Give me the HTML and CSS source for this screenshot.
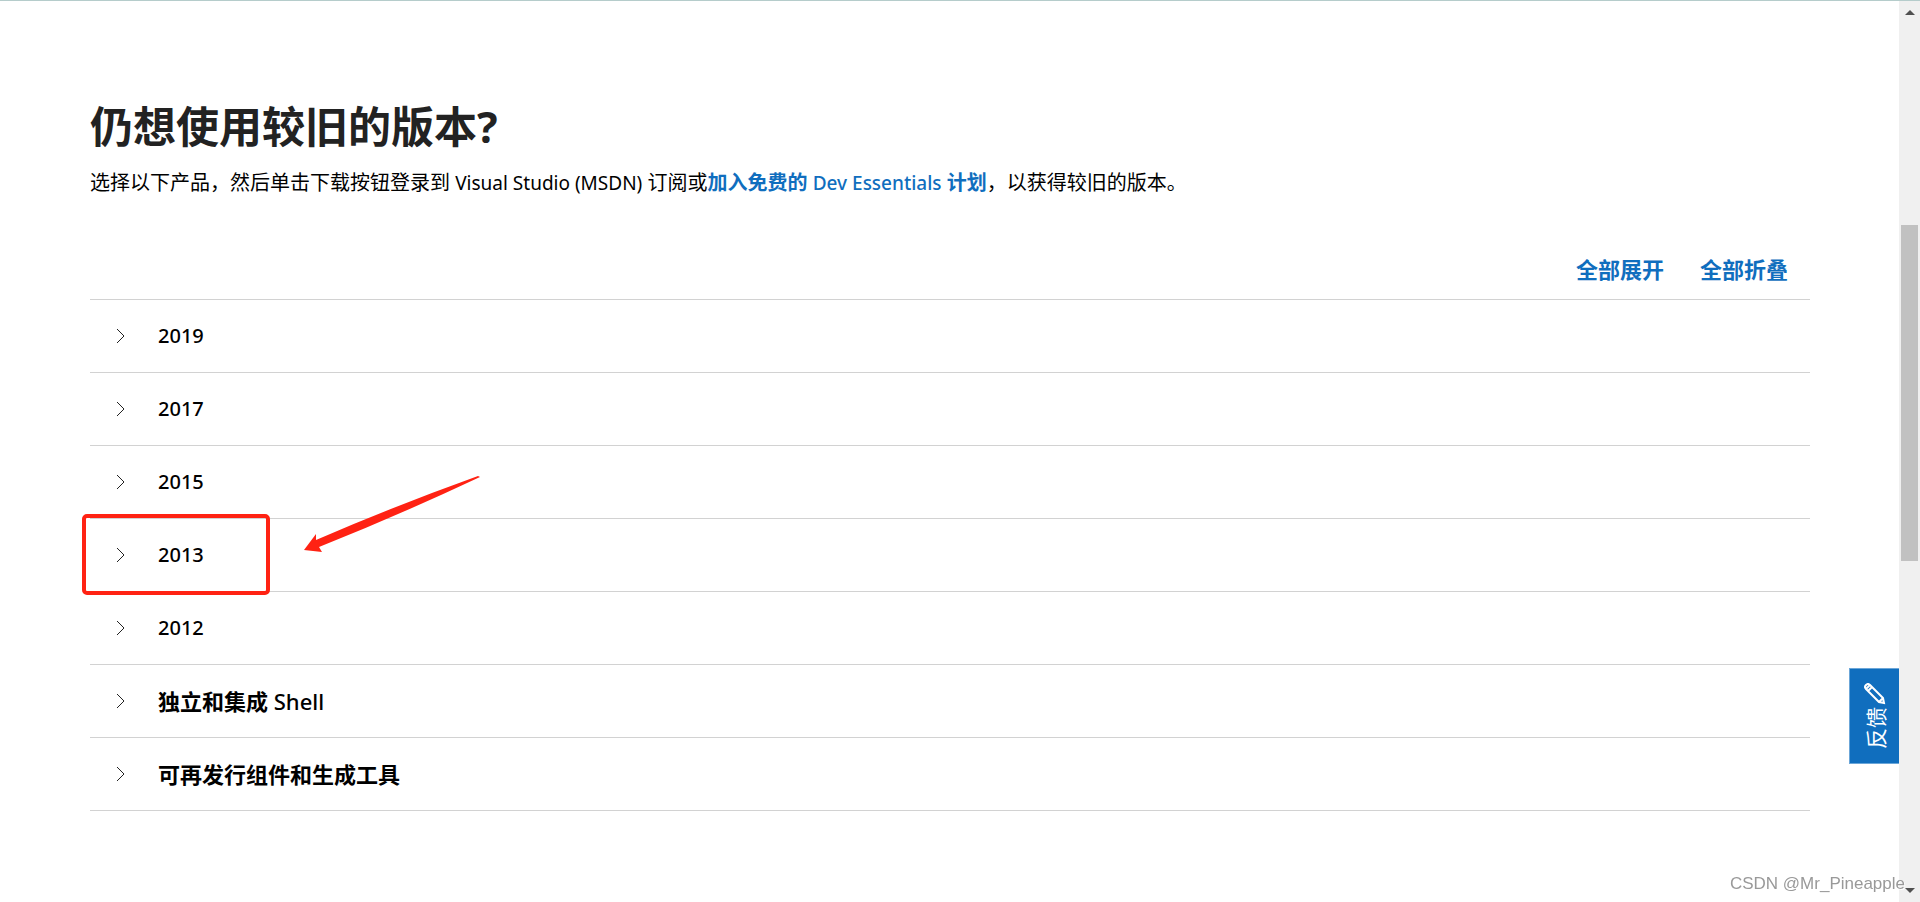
FILE: index.html
```html
<!DOCTYPE html>
<html lang="zh-CN">
<head>
    <meta charset="utf-8">
    <title>Visual Studio 较旧的下载</title>
    <link rel="stylesheet" href="styles.css">
</head>
<body>
    <main class="content">
        <h1>仍想使用较旧的版本?</h1>
        <p class="intro">选择以下产品，然后单击下载按钮登录到 <span class="latin">Visual Studio (MSDN)</span> 订阅或<a href="#">加入免费的 <span class="latin">Dev Essentials</span> 计划</a>，以获得较旧的版本。</p>

        <div class="actions">
            <button type="button">全部展开</button>
            <button type="button">全部折叠</button>
        </div>

        <ul class="versions">
            <li class="year"><button type="button"><svg class="chevron" viewBox="0 0 10 16"><path d="M1 1l7 7-7 7"/></svg>2019</button></li>
            <li class="year"><button type="button"><svg class="chevron" viewBox="0 0 10 16"><path d="M1 1l7 7-7 7"/></svg>2017</button></li>
            <li class="year"><button type="button"><svg class="chevron" viewBox="0 0 10 16"><path d="M1 1l7 7-7 7"/></svg>2015</button></li>
            <li class="year">
                <button type="button"><svg class="chevron" viewBox="0 0 10 16"><path d="M1 1l7 7-7 7"/></svg>2013</button>
                <span class="mark-box"></span>
                <svg class="mark-arrow" viewBox="0 0 180 80"><path d="M2 76L14 60 14 66Q90 33 176 2L178 3Q95 42 17 73L20 78z"/></svg>
            </li>
            <li class="year"><button type="button"><svg class="chevron" viewBox="0 0 10 16"><path d="M1 1l7 7-7 7"/></svg>2012</button></li>
            <li><button type="button"><svg class="chevron" viewBox="0 0 10 16"><path d="M1 1l7 7-7 7"/></svg><span>独立和集成 <span class="shell">Shell</span></span></button></li>
            <li><button type="button"><svg class="chevron" viewBox="0 0 10 16"><path d="M1 1l7 7-7 7"/></svg>可再发行组件和生成工具</button></li>
        </ul>
    </main>

    <div class="scrollbar">
        <svg class="scroll-arrow" viewBox="0 0 10 5"><path d="M0 5L5 0l5 5z"/></svg>
        <div class="track"><div class="thumb"></div></div>
        <svg class="scroll-arrow" viewBox="0 0 10 5"><path d="M0 0h10L5 5z"/></svg>
    </div>

    <button type="button" class="feedback">
        <svg viewBox="0 0 22 22"><path d="M2 6L6 2Q4 0 2 2T2 6L15 19l5 1-1-5L6 2M4 8l4-4M15 19l4-4"/></svg>
        <span>反馈</span>
    </button>
    <div class="watermark">CSDN @Mr_Pineapple</div>
</body>
</html>
```
FILE: styles.css
```css
* {
    box-sizing: border-box;
}
body {
    display: flex;
    min-height: 100vh;
    margin: 0;
    border-top: 1px solid #b5cccb;
    overflow: hidden;
    background: #fff;
    color: #000;
    font-family: "Noto Sans", "Noto Sans CJK SC", sans-serif;
}
button {
    padding: 0;
    border: none;
    background: none;
    color: inherit;
    font: inherit;
    cursor: pointer;
}
.content {
    flex: 1;
    padding: 96px 89px 0 90px;
}
h1 {
    margin: 0;
    color: #222;
    font-size: 43px;
    line-height: 60px;
}
.intro {
    margin: 11px 0 0;
    font-size: 20px;
    line-height: 30px;
}
.intro a {
    color: #106ebe;
    font-weight: 600;
    text-decoration: none;
}
.intro .latin {
    font-size: 19px;
}
.intro a .latin {
    font-weight: 500;
}
.actions {
    display: flex;
    justify-content: flex-end;
    gap: 36px;
    margin-top: 55px;
    padding: 0 22px 14px;
    color: #106ebe;
    font-size: 22px;
    font-weight: 600;
    line-height: 32px;
}
.versions {
    margin: 0;
    padding: 0;
    border-top: 1px solid #d2d2d2;
    list-style: none;
}
.versions li {
    position: relative;
    border-bottom: 1px solid #d2d2d2;
}
.versions button {
    display: flex;
    align-items: center;
    gap: 32px;
    width: 100%;
    padding: 20px 26px;
    font-size: 22px;
    font-weight: 600;
    line-height: 32px;
    text-align: left;
}
.versions .year button {
    font-size: 20px;
    font-weight: 500;
}
.shell {
    font-weight: 500;
}
.chevron {
    width: 10px;
    height: 16px;
    fill: none;
    stroke: #222;
}

/* 标注 */
.mark-box {
    position: absolute;
    top: -5px;
    left: -8px;
    width: 188px;
    height: 81px;
    border: 4px solid #ff2213;
    border-radius: 5px;
}
.mark-arrow {
    position: absolute;
    top: -45px;
    left: 212px;
    width: 180px;
    height: 80px;
    fill: #ff2213;
}

/* 滚动条 */
.scrollbar {
    display: flex;
    flex-direction: column;
    align-items: center;
    width: 21px;
    padding: 9px 2px;
    background: #f0f0f0;
}
.scroll-arrow {
    width: 10px;
    height: 5px;
    fill: #505050;
}
.track {
    flex: 1;
    width: 100%;
    padding-top: 210px;
}
.thumb {
    height: 336px;
    background: #c1c1c1;
}

.feedback {
    position: fixed;
    right: 21px;
    bottom: 138px;
    display: flex;
    flex-direction: column;
    align-items: center;
    justify-content: center;
    gap: 2px;
    width: 50px;
    height: 96px;
    border: 1px solid #6ba6d8;
    border-right: none;
    background: #106ebe;
    color: #fff;
    font-size: 21px;
}
.feedback span {
    transform: rotate(180deg);
    writing-mode: vertical-rl;
    text-orientation: sideways;
}
.feedback svg {
    width: 22px;
    height: 22px;
    fill: none;
    stroke: #fff;
    stroke-width: 2;
}
.watermark {
    position: fixed;
    right: 15px;
    bottom: 6px;
    color: #999;
    font-family: "Liberation Sans", sans-serif;
    font-size: 17px;
    line-height: 24px;
    text-shadow: 1px 1px 0 #fff;
}
```
